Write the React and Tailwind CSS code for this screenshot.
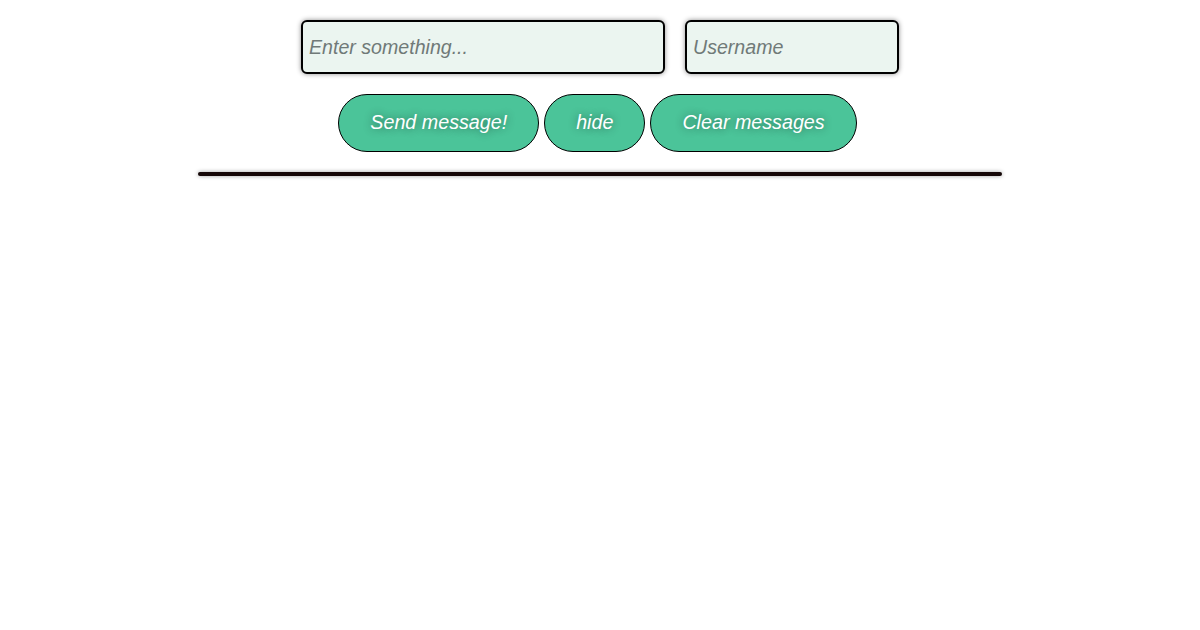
export default function App() {
  return (
    <div className="min-h-[630px] bg-white pt-5 font-['Liberation_Sans',Arial,sans-serif]">
      {/* inputs */}
      <div className="flex justify-center gap-5">
        <input
          type="text"
          placeholder="Enter something..."
          className="w-[364px] h-[54px] px-[6px] rounded-md border-2 border-black bg-[#ebf5f0] text-[19.6px] italic text-gray-800 placeholder:text-[#707a78] shadow-[0_0_5px_rgba(0,0,0,0.45)] outline-none"
        />
        <input
          type="text"
          placeholder="Username"
          className="w-[214px] h-[54px] px-[6px] rounded-md border-2 border-black bg-[#ebf5f0] text-[19.6px] italic text-gray-800 placeholder:text-[#707a78] shadow-[0_0_5px_rgba(0,0,0,0.45)] outline-none"
        />
      </div>

      {/* buttons */}
      <div className="flex justify-center gap-[5px] mt-5 pr-[5px]">
        <button className="h-[58px] px-[31px] rounded-full border border-black bg-[#4bc499] text-white italic text-[19.7px] [text-shadow:0_0_8px_rgba(0,0,0,0.45)]">
          Send message!
        </button>
        <button className="h-[58px] px-[31px] rounded-full border border-black bg-[#4bc499] text-white italic text-[19.7px] [text-shadow:0_0_8px_rgba(0,0,0,0.45)]">
          hide
        </button>
        <button className="h-[58px] px-[31px] rounded-full border border-black bg-[#4bc499] text-white italic text-[19.7px] [text-shadow:0_0_8px_rgba(0,0,0,0.45)]">
          Clear messages
        </button>
      </div>

      <hr className="mx-auto mt-5 w-[67%] h-1 border-0 rounded-sm bg-[#140606] shadow-[0_0_4px_rgba(0,0,0,0.4)]" />
    </div>
  );
}
